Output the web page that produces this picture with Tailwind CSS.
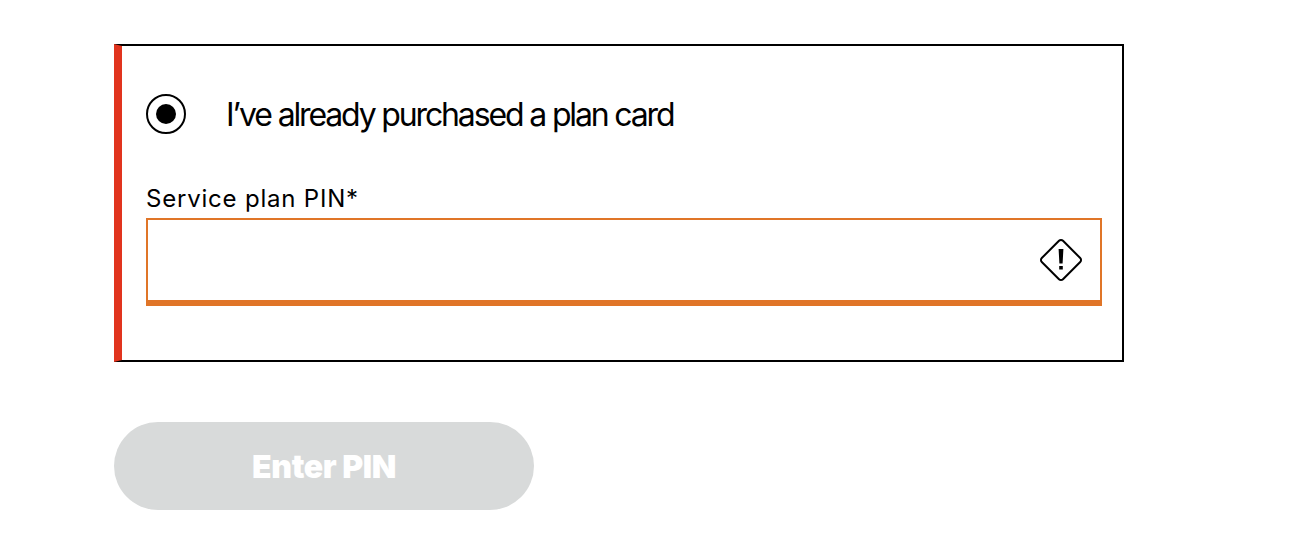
<!DOCTYPE html>
<html lang="en">
  <head>
    <meta charset="UTF-8" />
    <title>Service plan PIN</title>
    <script src="https://cdn.jsdelivr.net/npm/@tailwindcss/browser@4"></script>
  </head>
  <body class="bg-white font-['Inter','Liberation_Sans',Arial,sans-serif] text-black">
    <div class="pt-[44px] pl-[114px] w-[1124px]">
      <div class="h-[318px] border-2 border-l-8 border-black border-l-[#e1341e] pt-[48px] pl-6 pr-5">
        <div class="flex items-center h-10">
          <div class="w-10 h-10 rounded-full border-2 border-black flex items-center justify-center">
            <div class="w-5 h-5 rounded-full bg-black"></div>
          </div>
          <span class="ml-10 mt-[2px] text-[32px] leading-10 tracking-[-2.15px]">I’ve already purchased a plan card</span>
        </div>
        <label class="block mt-[51px] text-[24px] leading-[28px] tracking-[0.8px]">Service plan PIN*</label>
        <div class="mt-[5px] h-[88px] border-2 border-b-[6px] border-[#e07528] flex items-center justify-end pr-[17px]">
          <svg class="w-11 h-11" viewBox="0 0 44 44" fill="none">
            <path d="M20 2.8 2.8 20a2.8 2.8 0 0 0 0 4L20 41.2a2.8 2.8 0 0 0 4 0L41.2 24a2.8 2.8 0 0 0 0-4L24 2.8a2.8 2.8 0 0 0-4 0Z" stroke="#000" stroke-width="2" />
            <path d="M19.6 11h4.8l-.8 14.5h-3.2zM20.2 28h3.6v3.6h-3.6z" fill="#000" />
          </svg>
        </div>
      </div>
      <button class="mt-[60px] w-[420px] h-[88px] pt-[2px] rounded-[44px] bg-[#d8dada] text-white font-black text-[32px] tracking-[-0.4px]">Enter PIN</button>
    </div>
  </body>
</html>
